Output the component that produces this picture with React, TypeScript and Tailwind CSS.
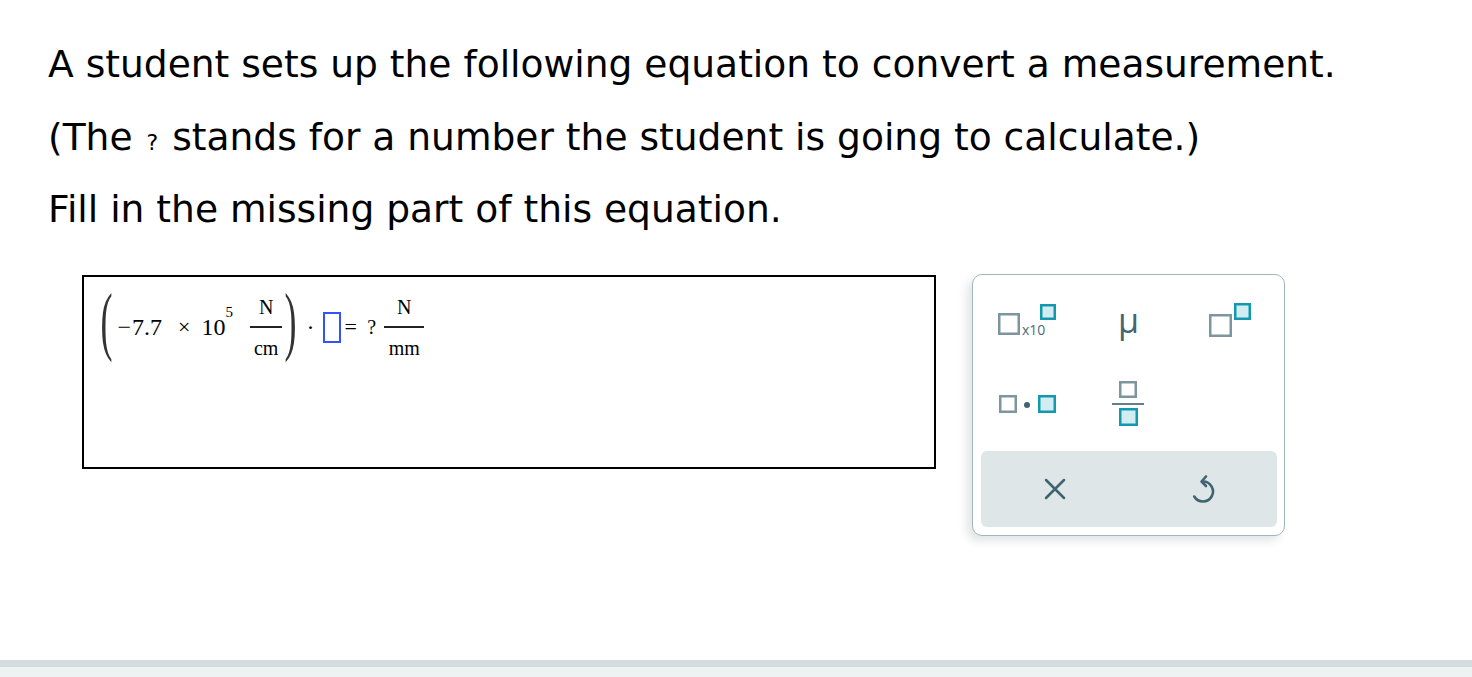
import React from 'react';

const GRAY = '#7d959e';
const TEAL = '#1399ae';
const TEAL_FILL = '#d1edf2';
const DARK = '#3f6470';

function Frac({ num, den, pad }: { num: string; den: string; pad: string }) {
  return (
    <div className="flex flex-col items-center">
      <span className="text-[20px] leading-[20px]">{num}</span>
      <div className="h-[1.5px] w-full bg-[#222] mt-[9.5px] mb-[10px]" />
      <span className={`text-[20px] leading-[20px] ${pad}`}>{den}</span>
    </div>
  );
}

function Equation() {
  return (
    <div className="flex items-center pl-[16.5px] pt-[19.5px] text-black" style={{ fontFamily: '"Liberation Serif", serif' }}>
      <span className="inline-block text-[36px] leading-none scale-y-[2.1] -translate-y-[6px] text-[#333]">(</span>
      <span className="ml-[5px] text-[24px] leading-none">−</span>
      <span className="ml-[1px] text-[24px] leading-none">7.7</span>
      <span className="ml-[16px] text-[22px] leading-none">×</span>
      <span className="ml-[11px] text-[24px] leading-none">10</span>
      <span className="relative -top-[15px] text-[15px] leading-none">5</span>
      <div className="ml-[17px]">
        <Frac num="N" den="cm" pad="px-[4px]" />
      </div>
      <span className="ml-[2px] inline-block text-[36px] leading-none scale-y-[2.1] -translate-y-[6px] text-[#333]">)</span>
      <span className="ml-[10px] text-[24px] leading-none">·</span>
      <div className="ml-[9px] w-[18px] h-[31px] border-2 border-[#3352fb]" />
      <span className="ml-[3px] text-[22px] leading-none">=</span>
      <span className="ml-[10.5px] text-[20px] leading-none">?</span>
      <div className="ml-[8px]">
        <Frac num="N" den="mm" pad="px-[4.5px]" />
      </div>
    </div>
  );
}

function TimesTenIcon() {
  return (
    <svg width="62" height="38" viewBox="0 0 62 38">
      <rect x="3.25" y="13.25" width="19.5" height="19.5" fill="white" stroke={GRAY} strokeWidth="2.5" />
      <text x="26" y="34" fontSize="14" fill="#4d6b76" fontFamily="'Open Sans', sans-serif">x10</text>
      <rect x="45.25" y="4.25" width="13.5" height="13.5" fill={TEAL_FILL} stroke={TEAL} strokeWidth="2.5" />
    </svg>
  );
}

function SuperIcon() {
  return (
    <svg width="44" height="38" viewBox="0 0 44 38">
      <rect x="2.25" y="14.25" width="20.5" height="20.5" fill="white" stroke={GRAY} strokeWidth="2.5" />
      <rect x="27.25" y="3.25" width="14.5" height="14.5" fill={TEAL_FILL} stroke={TEAL} strokeWidth="2.5" />
    </svg>
  );
}

function DotIcon() {
  return (
    <svg width="60" height="22" viewBox="0 0 60 22">
      <rect x="3.25" y="3.25" width="15.5" height="15.5" fill="white" stroke={GRAY} strokeWidth="2.5" />
      <circle cx="30" cy="12" r="3" fill={DARK} />
      <rect x="42.25" y="3.25" width="15.5" height="15.5" fill={TEAL_FILL} stroke={TEAL} strokeWidth="2.5" />
    </svg>
  );
}

function FracIcon() {
  return (
    <svg width="32" height="46" viewBox="0 0 32 46">
      <rect x="8.25" y="1.25" width="15.5" height="14.5" fill="white" stroke={GRAY} strokeWidth="2.5" />
      <rect x="0" y="22" width="32" height="2" fill="#5f7f8a" />
      <rect x="8.25" y="28.25" width="16.5" height="15.5" fill={TEAL_FILL} stroke={TEAL} strokeWidth="2.5" />
    </svg>
  );
}

function CloseIcon() {
  return (
    <svg width="22" height="22" viewBox="0 0 22 22">
      <path d="M2 2 L20 20 M20 2 L2 20" stroke={DARK} strokeWidth="2.5" strokeLinecap="round" />
    </svg>
  );
}

function UndoIcon() {
  return (
    <svg width="26" height="32" viewBox="0 0 26 32" fill="none">
      <path d="M13 8.5 A10 10 0 1 1 4.3 23.5" stroke={DARK} strokeWidth="2.6" strokeLinecap="round" />
      <path d="M16 3.5 L11.5 8.5 L16 13" stroke={DARK} strokeWidth="2.6" strokeLinecap="round" strokeLinejoin="round" />
    </svg>
  );
}

function Palette() {
  return (
    <div className="w-[313px] h-[262px] -mt-px rounded-[10px] border-[1.5px] border-[#a3b6bd] bg-white px-[7.5px] pt-[2.5px] pb-[7.5px] shadow-[-5px_5px_10px_rgba(0,40,60,0.12)]">
      <div className="grid grid-cols-3">
        <div className="h-[84px] flex items-center justify-center">
          <div className="-ml-[6px]"><TimesTenIcon /></div>
        </div>
        <div className="h-[84px] flex items-center justify-center">
          <span className="text-[34px] leading-none text-[#45656f]" style={{ fontFamily: '"Open Sans", sans-serif' }}>μ</span>
        </div>
        <div className="h-[84px] flex items-center justify-center">
          <div className="ml-[6px]"><SuperIcon /></div>
        </div>
        <div className="h-[84px] flex items-center justify-center">
          <div className="-ml-[6px]"><DotIcon /></div>
        </div>
        <div className="h-[84px] flex items-center justify-center">
          <FracIcon />
        </div>
        <div className="h-[84px]" />
      </div>
      <div className="mt-[5px] h-[76px] rounded-[6px] bg-[#dfe6e8] grid grid-cols-2">
        <div className="flex items-center justify-center"><CloseIcon /></div>
        <div className="flex items-center justify-center"><UndoIcon /></div>
      </div>
    </div>
  );
}

export default function App() {
  return (
    <div className="h-[677px] w-[1472px] flex flex-col bg-white overflow-hidden">
      <div className="pl-[48px] pt-[28px] text-black" style={{ fontFamily: '"DejaVu Sans", sans-serif' }}>
        <div className="text-[37.6px] leading-[72.5px]">A student sets up the following equation to convert a measurement.</div>
        <div className="text-[37.6px] leading-[72.5px]">
          (The <span className="text-[22px] leading-none mx-[2px]">?</span> stands for a number the student is going to calculate.)
        </div>
        <div className="text-[37.6px] leading-[72.5px]">Fill in the missing part of this equation.</div>
        <div className="ml-[34px] mt-[29.5px] flex items-start gap-[36px]">
          <div className="w-[854px] h-[194px] border-2 border-black">
            <Equation />
          </div>
          <Palette />
        </div>
      </div>
      <div className="mt-auto h-[17px] border-t-[7px] border-[#d3dcdf] bg-[#eef2f3]" />
    </div>
  );
}
